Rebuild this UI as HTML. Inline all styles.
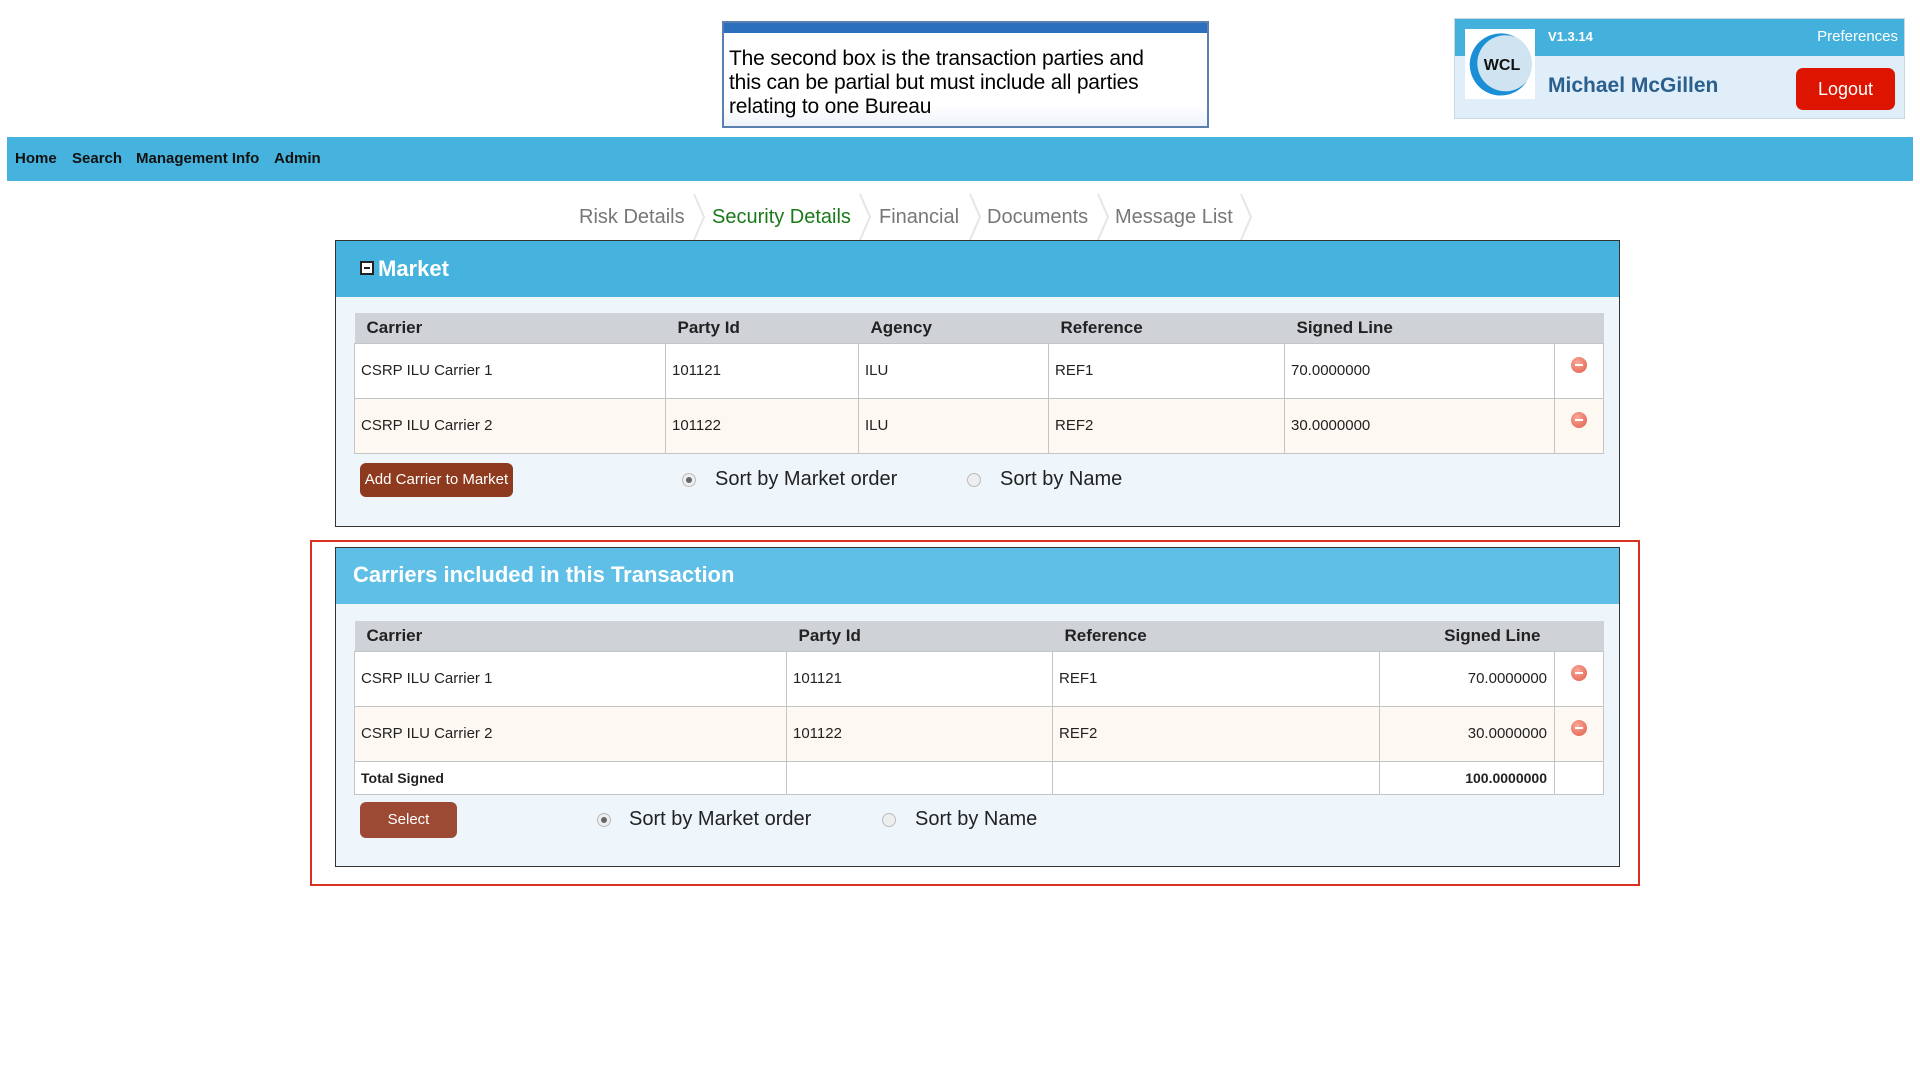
<!DOCTYPE html>
<html><head><meta charset="utf-8"><style>
*{box-sizing:border-box;margin:0;padding:0}
body{width:1920px;height:1078px;background:#fff;font-family:"Liberation Sans",sans-serif;position:relative;overflow:hidden;color:#222}
.a{position:absolute}
.callout{left:722px;top:21px;width:487px;height:107px;border:2px solid #5b7fae;background:linear-gradient(#fff 80%,#eef3fa)}
.callout .bar{height:10px;background:#2c6fbd}
.callout p{font-size:21px;line-height:24px;padding:14px 0 0 5px;color:#000;white-space:nowrap;letter-spacing:-0.2px}
.hdr{left:1454px;top:18px;width:451px;height:101px;background:#dfeef8;border:1px solid #c8d8e4}
.hdr .strip{position:absolute;left:0;top:0;right:0;height:37px;background:#44b1dd}
.logo{position:absolute;left:10px;top:10px;width:70px;height:70px;background:#fff}
.nav{left:7px;top:137px;width:1906px;height:44px;background:#45b3de}
.nav span{position:absolute;top:13px;font-size:15px;font-weight:bold;color:#111}
.tab{position:absolute;top:206px;font-size:20px;color:#777}
.panel{border:1px solid #333;background:#eef6fc}
.ph{position:absolute;left:0;top:0;right:0;background:#45b3de;color:#fff;font-weight:bold;font-size:22px}
table{position:absolute;border-collapse:collapse;font-size:15px}
th{background:#cfd3d7;text-align:left;font-size:17px;font-weight:bold;color:#222;padding-left:12px;height:30px}
td{border:1px solid #c4c4c4;padding-left:6px;color:#222}
tr.r1 td{background:#fff}tr.r2 td{background:#fdf9f2}
.min{display:inline-block;width:16px;height:16px;border-radius:50%;background:radial-gradient(circle at 40% 35%,#f9a99a,#e05a48);position:relative;vertical-align:middle}
.min:after{content:"";position:absolute;left:4px;top:7px;width:8px;height:2px;background:#fff}
.btn{position:absolute;background:#8d3a1f;color:#fff;border-radius:6px;font-size:15px;text-align:center}
.radio{position:absolute;width:14px;height:14px;border-radius:50%;border:1px solid #bbb;background:#eee}
.radio.on:after{content:"";position:absolute;left:3px;top:3px;width:6px;height:6px;border-radius:50%;background:#666}
.rl{position:absolute;font-size:20px;color:#222}
</style></head><body>

<div class="a callout"><div class="bar"></div><p>The second box is the transaction parties and<br>this can be partial but must include all parties<br>relating to one Bureau</p></div>

<div class="a hdr"><div class="strip"></div>
<div class="logo"><svg width="70" height="70" viewBox="0 0 70 70"><circle cx="36" cy="35" r="31" fill="#cfe4f0"/><path d="M50 8 A31 31 0 1 0 62 52 A28 28 0 1 1 50 8Z" fill="#1b8fd6"/><text x="37" y="41" font-family="Liberation Sans" font-weight="bold" font-size="16" text-anchor="middle" fill="#111">WCL</text></svg></div>
<span class="a" style="left:93px;top:10px;font-size:13px;font-weight:bold;color:#fff">V1.3.14</span>
<span class="a" style="right:6px;top:9px;font-size:15px;color:#fff">Preferences</span>
<span class="a" style="left:93px;top:55px;font-size:21px;font-weight:bold;color:#2b5f8e">Michael McGillen</span>
<div class="a" style="left:341px;top:49px;width:99px;height:42px;background:#dd1500;border-radius:7px;color:#fff;font-size:18px;text-align:center;line-height:42px">Logout</div>
</div>

<div class="a nav"><span style="left:8px">Home</span><span style="left:65px">Search</span><span style="left:129px">Management Info</span><span style="left:267px">Admin</span></div>

<svg class="a" style="left:0;top:0" width="1920" height="260">
<g fill="none" stroke="#e6e6e6" stroke-width="2">
<path d="M694 194 L704 217 L694 240"/><path d="M860 194 L870 217 L860 240"/><path d="M970 194 L980 217 L970 240"/><path d="M1098 194 L1108 217 L1098 240"/><path d="M1241 194 L1251 217 L1241 240"/></g></svg>
<span class="tab" style="left:579px">Risk Details</span>
<span class="tab" style="left:712px;color:#1a7a1a">Security Details</span>
<span class="tab" style="left:879px">Financial</span>
<span class="tab" style="left:987px">Documents</span>
<span class="tab" style="left:1115px">Message List</span>

<div class="a panel" style="left:335px;top:240px;width:1285px;height:287px">
<div class="ph" style="height:56px;line-height:56px;padding-left:24px"><span style="display:inline-block;width:14px;height:14px;border:2px solid #222;background:#fff;vertical-align:1px;margin-right:4px;position:relative"><span style="position:absolute;left:2px;top:4px;width:6px;height:2px;background:#222"></span></span>Market</div>
</div>
<table style="left:354px;top:313px;width:1250px">
<tr><th style="width:311px">Carrier</th><th style="width:193px">Party Id</th><th style="width:190px">Agency</th><th style="width:236px">Reference</th><th style="width:270px">Signed Line</th><th></th></tr>
<tr class="r1" style="height:55px"><td>CSRP ILU Carrier 1</td><td>101121</td><td>ILU</td><td>REF1</td><td>70.0000000</td><td style="text-align:center;padding:0;vertical-align:top;padding-top:12px"><span class="min"></span></td></tr>
<tr class="r2" style="height:55px"><td>CSRP ILU Carrier 2</td><td>101122</td><td>ILU</td><td>REF2</td><td>30.0000000</td><td style="text-align:center;padding:0;vertical-align:top;padding-top:12px"><span class="min"></span></td></tr>
</table>
<div class="btn" style="left:360px;top:463px;width:153px;height:34px;line-height:34px">Add Carrier to Market</div>
<div class="radio on" style="left:682px;top:473px"></div><span class="rl" style="left:715px;top:468px">Sort by Market order</span>
<div class="radio" style="left:967px;top:473px"></div><span class="rl" style="left:1000px;top:468px">Sort by Name</span>

<div class="a" style="left:310px;top:540px;width:1330px;height:346px;border:2px solid #d9301f"></div>
<div class="a panel" style="left:335px;top:547px;width:1285px;height:320px">
<div class="ph" style="height:56px;line-height:54px;padding-left:17px;background:#5fbfe6">Carriers included in this Transaction</div>
</div>
<table style="left:354px;top:621px;width:1250px">
<tr><th style="width:432px">Carrier</th><th style="width:266px">Party Id</th><th style="width:327px">Reference</th><th style="width:175px;text-align:right;padding-right:14px">Signed Line</th><th></th></tr>
<tr class="r1" style="height:55px"><td>CSRP ILU Carrier 1</td><td>101121</td><td>REF1</td><td style="text-align:right;padding-right:7px">70.0000000</td><td style="text-align:center;padding:0;vertical-align:top;padding-top:12px"><span class="min"></span></td></tr>
<tr class="r2" style="height:55px"><td>CSRP ILU Carrier 2</td><td>101122</td><td>REF2</td><td style="text-align:right;padding-right:7px">30.0000000</td><td style="text-align:center;padding:0;vertical-align:top;padding-top:12px"><span class="min"></span></td></tr>
<tr class="r1" style="height:33px;font-weight:bold;font-size:14px"><td>Total Signed</td><td></td><td></td><td style="text-align:right;padding-right:7px">100.0000000</td><td></td></tr>
</table>
<div class="btn" style="left:360px;top:802px;width:97px;height:36px;line-height:36px;background:#9c4a34">Select</div>
<div class="radio on" style="left:597px;top:813px"></div><span class="rl" style="left:629px;top:808px">Sort by Market order</span>
<div class="radio" style="left:882px;top:813px"></div><span class="rl" style="left:915px;top:808px">Sort by Name</span>

</body></html>
